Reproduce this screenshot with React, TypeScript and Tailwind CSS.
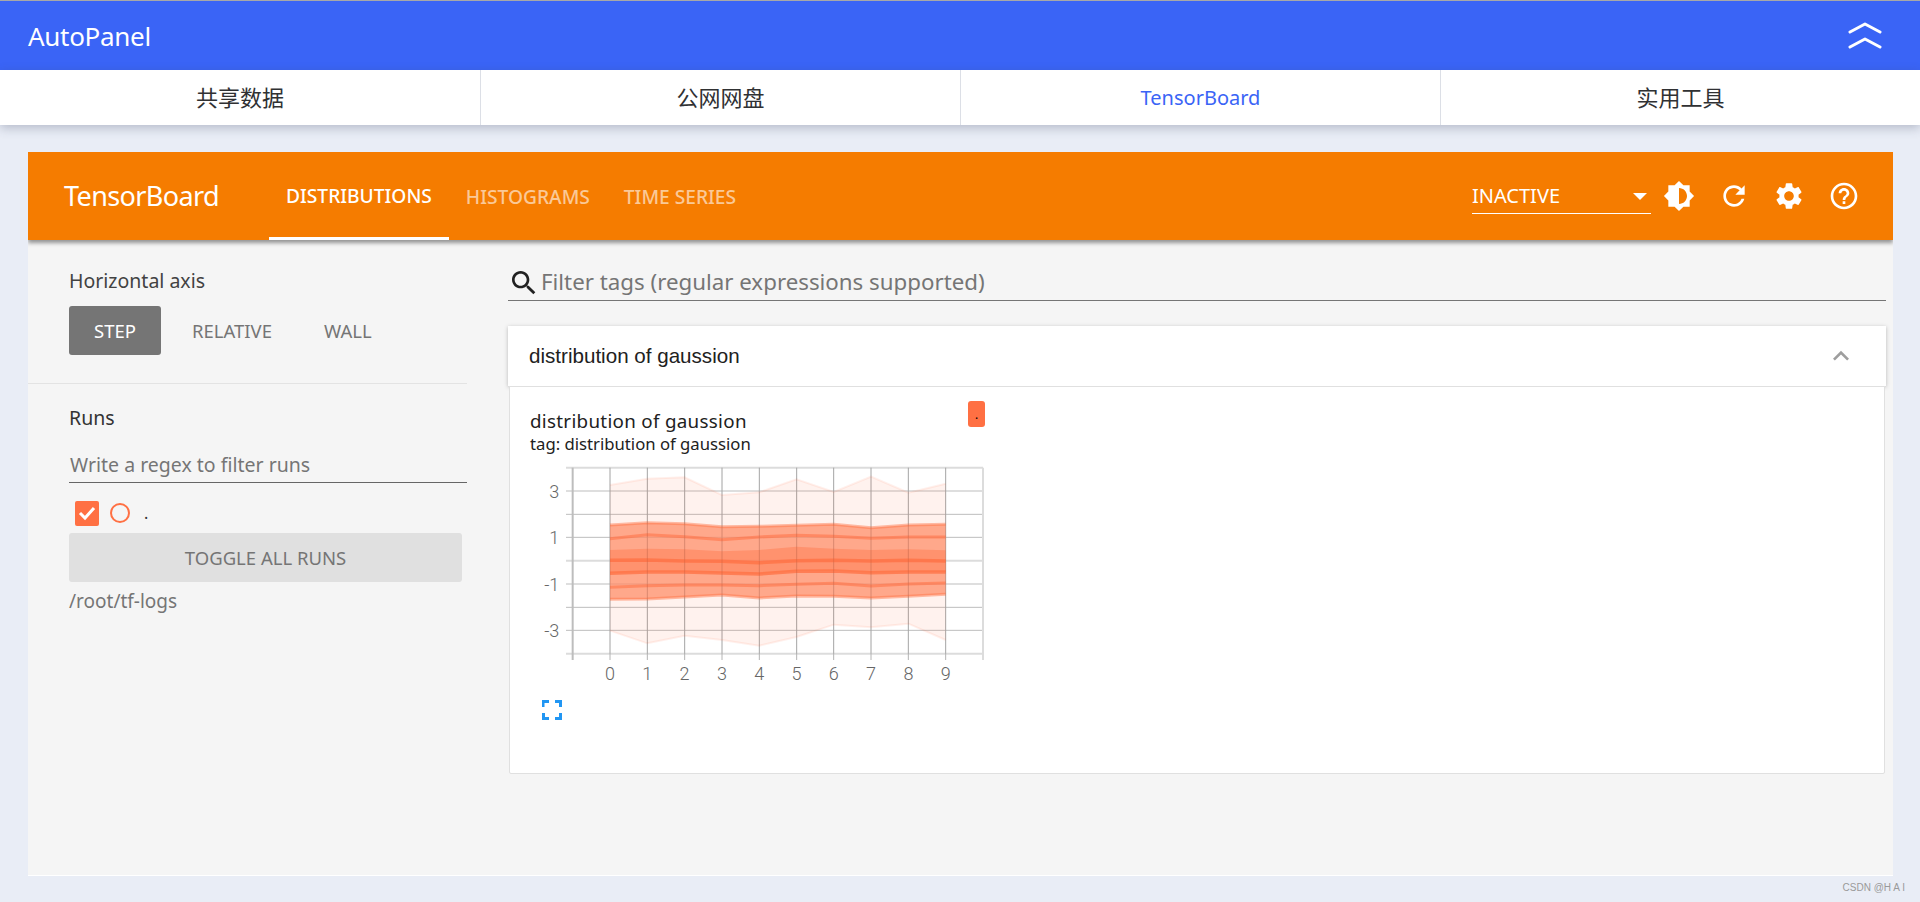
const CJK = "font-['Noto_Sans','Noto_Sans_CJK_SC',sans-serif]";

const tabs = ["共享数据", "公网网盘", "TensorBoard", "实用工具"];

// distribution curves, y per step, in reference chart pixels * 3
const curves = [
  [285, 266, 262, 315, 307, 268, 306, 260, 308, 281],
  [405, 398, 401, 410, 409, 406, 403, 413, 405, 403],
  [446, 434, 440, 449, 441, 436, 439, 445, 441, 441],
  [480, 476, 478, 484, 480, 470, 476, 480, 478, 481],
  [511, 510, 513, 514, 518, 512, 511, 513, 511, 513],
  [550, 546, 546, 549, 552, 544, 543, 548, 546, 546],
  [592, 587, 585, 585, 587, 583, 580, 588, 582, 579],
  [628, 627, 621, 615, 624, 618, 619, 624, 619, 613],
  [722, 760, 737, 750, 767, 741, 704, 712, 701, 750],
];

const px = (zx: number) => zx / 3 + 500 - 530;
const py = (zy: number) => zy / 3 + 390 - 460;
const stepX = (i: number) => px(330 + i * 111.9);

const band = (upper: number[], lower: number[]) => {
  const top = upper.map((y, i) => `${stepX(i)},${py(y)}`);
  const bottom = lower.map((y, i) => `${stepX(i)},${py(y)}`).reverse();
  return [...top, ...bottom].join(" ");
};

const line = (ys: number[]) => ys.map((y, i) => `${stepX(i)},${py(y)}`).join(" ");

const gridY = [233, 303, 373, 442, 512, 582, 652, 721, 791];
const gridX = [218, 330, 442, 554, 666, 778, 890, 1001, 1113, 1225, 1337, 1449];

const labelFont = "Roboto, sans-serif";

const DistributionChart = () => (
  <svg width="460" height="232" viewBox="0 0 460 232" className="block">
    {gridY.map((y) => {
      const heavy = y === 233 || y === 791 || y === 512;
      return <line key={y} x1={px(198)} x2={px(1449)} y1={py(y)} y2={py(y)} stroke={heavy ? "#dcdcdc" : "#bdbdbd"} strokeWidth={heavy ? 2 : 1} />;
    })}
    {gridX.map((x) => {
      const edge = x === 218 || x === 1449;
      return <line key={x} x1={px(x)} x2={px(x)} y1={py(233)} y2={py(810)} stroke={x === 218 ? "#bdbdbd" : edge ? "#dcdcdc" : "#b4b4b4"} strokeWidth={edge ? 2 : 1} />;
    })}
    <polygon points={band(curves[0], curves[8])} fill="#ff7043" fillOpacity={0.09} />
    <polyline points={line(curves[0])} fill="none" stroke="#ff7043" strokeOpacity={0.1} strokeWidth={2} />
    <polyline points={line(curves[8])} fill="none" stroke="#ff7043" strokeOpacity={0.1} strokeWidth={2} />
    <polygon points={band(curves[1], curves[7])} fill="#ff8a65" fillOpacity={0.72} />
    <polygon points={band(curves[3], curves[5])} fill="#ff7043" fillOpacity={0.4} />
    {[1, 7].map((i) => (
      <polyline key={i} points={line(curves[i])} fill="none" stroke="#ff7043" strokeOpacity={0.45} strokeWidth={3} />
    ))}
    {[2, 6].map((i) => (
      <polyline key={i} points={line(curves[i])} fill="none" stroke="#ff7043" strokeOpacity={0.55} strokeWidth={3} />
    ))}
    {[4, 5].map((i) => (
      <polyline key={i} points={line(curves[i])} fill="none" stroke="#ff7043" strokeOpacity={0.75} strokeWidth={3.5} />
    ))}
    {gridX.slice(1, 11).map((x) => (
      <line key={x} x1={px(x)} x2={px(x)} y1={py(233)} y2={py(791)} stroke="#000" strokeOpacity={0.08} strokeWidth={1} />
    ))}
    {[
      ["3", 303],
      ["1", 442],
      ["-1", 582],
      ["-3", 721],
    ].map(([label, y]) => (
      <text key={label} x={px(178)} y={py(y as number) + 7} textAnchor="end" fontSize="18" fontWeight="300" fill="#666" fontFamily={labelFont}>
        {label}
      </text>
    ))}
    {Array.from({ length: 10 }, (_, i) => (
      <text key={i} x={stepX(i)} y={py(871)} textAnchor="middle" fontSize="18" fontWeight="300" fill="#666" fontFamily={labelFont}>
        {i}
      </text>
    ))}
  </svg>
);

const IconButton = ({ d }: { d: string }) => (
  <button className="flex w-[55px] h-[55px] items-center justify-center">
    <svg width="32" height="32" viewBox="0 0 24 24" fill="#fff">
      <path d={d} />
    </svg>
  </button>
);

export default function App() {
  return (
    <div className={`relative min-h-[902px] bg-[#e9edf6] ${CJK}`}>
      <header className="flex h-[70px] items-center justify-between border-t border-[#a8a8a8] bg-[#3a64f6] pl-7 pr-[38px] text-white">
        <span className="text-[26px] leading-none tracking-[-0.3px]">AutoPanel</span>
        <svg width="34" height="30" viewBox="0 0 34 30" fill="none" stroke="#fff" strokeWidth="3" strokeLinecap="round" strokeLinejoin="round">
          <path d="M2 11 L17 3 L32 11" />
          <path d="M2 26 L17 18 L32 26" />
        </svg>
      </header>

      <nav className="grid h-[55px] grid-cols-4 bg-white shadow-[0_3px_10px_rgba(60,70,100,0.3)]">
        {tabs.map((tab, i) => (
          <div
            key={tab}
            className={`flex items-center justify-center ${i > 0 ? "border-l border-[#dcdfe6]" : ""} ${
              tab === "TensorBoard" ? "text-[20px] text-[#3a64f6]" : "text-[22px] text-[#303133]"
            }`}
          >
            {tab}
          </div>
        ))}
      </nav>

      <main className="ml-7 mr-[27px] mt-[27px] flex h-[724px] flex-col overflow-hidden border-b border-white bg-[#f5f5f5]">
        <div className="z-10 flex h-[88px] shrink-0 items-center justify-between bg-[#f57c00] pl-9 pr-[22px] text-white shadow-[0_3px_4px_rgba(0,0,0,0.4)]">
          <div className="flex h-full items-center">
            <span className="w-[205px] text-[27px] tracking-[-0.6px]">TensorBoard</span>
            <div className="flex h-full items-center text-[19.2px] font-medium">
              <span className="flex h-full items-center border-b-[3px] border-white px-[17px] pt-[3px]">DISTRIBUTIONS</span>
              <span className="flex h-full items-center px-[17px] pt-[3px] text-white/60">HISTOGRAMS</span>
              <span className="flex h-full items-center px-[17px] pt-[3px] text-white/60">TIME SERIES</span>
            </div>
          </div>
          <div className="flex items-center">
            <div className="mt-[2px] flex h-[33px] w-[179px] items-center justify-between border-b border-white pr-[4px] text-[20px]">
              <span className="pb-[2px]">INACTIVE</span>
              <span className="h-0 w-0 border-x-[7px] border-t-[7px] border-x-transparent border-t-white" />
            </div>
            <IconButton d="M20 15.31L23.31 12 20 8.69V4h-4.69L12 .69 8.69 4H4v4.69L.69 12 4 15.31V20h4.69L12 23.31 15.31 20H20v-4.69zM12 18V6c3.31 0 6 2.69 6 6s-2.69 6-6 6z" />
            <IconButton d="M17.65 6.35C16.2 4.9 14.21 4 12 4c-4.42 0-7.99 3.58-7.99 8s3.57 8 7.99 8c3.73 0 6.84-2.55 7.73-6h-2.08c-.82 2.33-3.04 4-5.65 4-3.31 0-6-2.69-6-6s2.69-6 6-6c1.66 0 3.14.69 4.22 1.78L13 11h7V4l-2.35 2.35z" />
            <IconButton d="M19.14 12.94c.04-.3.06-.61.06-.94 0-.32-.02-.64-.07-.94l2.03-1.58c.18-.14.23-.41.12-.61l-1.92-3.32c-.12-.22-.37-.29-.59-.22l-2.39.96c-.5-.38-1.03-.7-1.62-.94l-.36-2.54c-.04-.24-.24-.41-.48-.41h-3.84c-.24 0-.43.17-.47.41l-.36 2.54c-.59.24-1.13.57-1.62.94l-2.39-.96c-.22-.08-.47 0-.59.22L2.74 8.87c-.12.21-.08.47.12.61l2.03 1.58c-.05.3-.09.63-.09.94s.02.64.07.94l-2.03 1.58c-.18.14-.23.41-.12.61l1.92 3.32c.12.22.37.29.59.22l2.39-.96c.5.38 1.03.7 1.62.94l.36 2.54c.05.24.24.41.48.41h3.84c.24 0 .44-.17.47-.41l.36-2.54c.59-.24 1.13-.56 1.62-.94l2.39.96c.22.08.47 0 .59-.22l1.92-3.32c.12-.22.07-.47-.12-.61l-2.01-1.58zM12 15.6c-1.98 0-3.6-1.62-3.6-3.6s1.62-3.6 3.6-3.6 3.6 1.62 3.6 3.6-1.62 3.6-3.6 3.6z" />
            <IconButton d="M11 18h2v-2h-2v2zm1-16C6.48 2 2 6.48 2 12s4.48 10 10 10 10-4.48 10-10S17.52 2 12 2zm0 18c-4.41 0-8-3.59-8-8s3.59-8 8-8 8 3.59 8 8-3.59 8-8 8zm0-14c-2.21 0-4 1.79-4 4h2c0-1.1.9-2 2-2s2 .9 2 2c0 2-3 1.75-3 5h2c0-2.25 3-2.5 3-5 0-2.21-1.79-4-4-4z" />
          </div>
        </div>

        <div className="flex min-h-0 flex-1">
          <aside className="w-[439px] shrink-0">
            <div className="border-b border-[#e3e3e3] pb-[28px] pl-[41px] pt-[28px]">
              <div className="text-[19.5px] leading-[26px] text-[#424242]">Horizontal axis</div>
              <div className="mt-[12px] flex h-[49px] items-center text-[18.5px] text-[#757575]">
                <span className="flex h-full w-[92px] items-center justify-center rounded-[3px] bg-[#757575] text-white">STEP</span>
                <span className="ml-[31px]">RELATIVE</span>
                <span className="ml-[52px]">WALL</span>
              </div>
            </div>
            <div className="pl-[41px]">
              <div className="mt-[21px] text-[19.5px] leading-[26px] text-[#333]">Runs</div>
              <div className="mt-[22px] h-[30px] border-b border-[#666] pl-px text-[19.5px] leading-[24px] text-[#757575]">Write a regex to filter runs</div>
              <div className="mt-[17px] flex h-[26px] items-center pl-[6px]">
                <span className="flex h-[25px] w-[24px] items-center justify-center rounded-[2px] bg-[#ff7043]">
                  <svg width="20" height="20" viewBox="0 0 20 20" fill="none" stroke="#fff" strokeWidth="3">
                    <path d="M3 10 L8 15 L17 5" />
                  </svg>
                </span>
                <span className="ml-[11px] h-[20px] w-[20px] rounded-full border-2 border-[#ff7043]" />
                <span className="ml-[14px] text-[16px] leading-none text-[#333]">.</span>
              </div>
              <div className="mt-[7px] flex h-[49px] w-[393px] items-center justify-center rounded-[3px] bg-[#e0e0e0] text-[18.5px] text-[#757575]">TOGGLE ALL RUNS</div>
              <div className="mt-[6px] text-[19px] leading-[26px] text-[#757575]">/root/tf-logs</div>
            </div>
          </aside>

          <section className="ml-[41px] mr-[7px] flex-1 pt-[25px]">
            <div className="flex h-[36px] items-center border-b border-[#757575]">
              <svg width="32" height="32" viewBox="0 0 24 24" fill="#212121">
                <path d="M15.5 14h-.79l-.28-.27C15.41 12.59 16 11.11 16 9.5 16 5.91 13.09 3 9.5 3S3 5.91 3 9.5 5.91 16 9.5 16c1.61 0 3.09-.59 4.23-1.57l.27.28v.79l5 4.99L20.49 19l-4.99-5zm-6 0C7.01 14 5 11.99 5 9.5S7.01 5 9.5 5 14 7.01 14 9.5 11.99 14 9.5 14z" />
              </svg>
              <span className="ml-px pb-[2px] text-[22.3px] text-[#757575]">Filter tags (regular expressions supported)</span>
            </div>

            <div className="mt-[25px] flex h-[60px] items-center justify-between bg-white pl-[21px] pr-[29px] font-['Liberation_Sans',sans-serif] text-[20.6px] text-[#212121] shadow-[0_1px_4px_rgba(0,0,0,0.25)]">
              distribution of gaussion
              <svg width="32" height="32" viewBox="0 0 24 24" fill="#9e9e9e">
                <path d="M12 8l-6 6 1.41 1.41L12 10.83l4.59 4.58L18 14z" />
              </svg>
            </div>
            <div className="mx-px h-[388px] rounded-b-[2px] border border-[#e0e0e0] bg-white pl-[20px] pt-[21px]">
              <div className="relative">
                <div className="text-[18.8px] leading-[26px] tracking-[0.3px] text-[#212121]">distribution of gaussion</div>
                <div className="text-[16.7px] leading-[20px] text-[#212121]">tag: distribution of gaussion</div>
                <span className="absolute left-[438px] top-[-7px] flex h-[26px] w-[17px] items-center justify-center rounded-[3px] bg-[#ff7043] pt-[2px] text-[12px] leading-none text-black">.</span>
              </div>
              <div className="mt-[6px]">
                <DistributionChart />
              </div>
              <svg width="20" height="20" viewBox="0 0 20 20" fill="none" stroke="#2196f3" strokeWidth="3" className="ml-[12px] mt-[8px]">
                <path d="M1 7 V1.5 H7 M13 1.5 H18.5 V7 M18.5 13 V18.5 H13 M7 18.5 H1.5 V13" />
              </svg>
            </div>
          </section>
        </div>
      </main>

      <span className="absolute bottom-[9px] right-[15px] font-['Liberation_Sans',sans-serif] text-[10px] leading-none text-[#9a9a9a]">CSDN @H A I</span>
    </div>
  );
}
